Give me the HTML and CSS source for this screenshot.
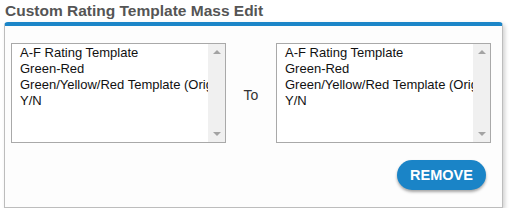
FILE: index.html
```html
<!DOCTYPE html>
<html>
<head>
<meta charset="utf-8">
<link rel="stylesheet" href="styles.css">
</head>
<body>
<h1 class="title">Custom Rating Template Mass Edit</h1>
<div class="panel">
  <div class="row">
    <div class="listbox">
      <ul class="options">
        <li>A-F Rating Template</li>
        <li>Green-Red</li>
        <li>Green/Yellow/Red Template (Original)</li>
        <li>Y/N</li>
      </ul>
      <div class="scrollbar"><span class="arrow up"></span><span class="arrow down"></span></div>
    </div>
    <div class="to">To</div>
    <div class="listbox">
      <ul class="options">
        <li>A-F Rating Template</li>
        <li>Green-Red</li>
        <li>Green/Yellow/Red Template (Original)</li>
        <li>Y/N</li>
      </ul>
      <div class="scrollbar"><span class="arrow up"></span><span class="arrow down"></span></div>
    </div>
  </div>
  <div class="actions">
    <button class="btn">REMOVE</button>
  </div>
</div>
</body>
</html>
```
FILE: styles.css
```css
html, body {
  margin: 0;
  padding: 0;
  background: #ffffff;
  font-family: "Liberation Sans", Arial, sans-serif;
}
.title {
  margin: 0;
  padding: 2px 0 0 5px;
  height: 20px;
  font-size: 15.5px;
  line-height: 18px;
  font-weight: bold;
  color: #555555;
}
.panel {
  margin-left: 4px;
  width: 491px;
  height: 164px;
  border: 1px solid #bdbdbd;
  border-top: 4px solid #1c86c8;
  border-radius: 4px 4px 0 0;
  background: #fdfdfd;
  box-shadow: 2px 2px 4px rgba(0,0,0,0.18);
  padding: 17px 0 0 6px;
}
.row {
  display: flex;
  align-items: center;
}
.listbox {
  width: 213px;
  height: 98px;
  border: 1px solid #a9a9a9;
  background: #ffffff;
  display: flex;
}
.options {
  list-style: none;
  margin: 0;
  padding: 1px 0 0 8px;
  flex: 1;
  min-width: 0;
  overflow: hidden;
  font-size: 13px;
  line-height: 16px;
  color: #111111;
  white-space: nowrap;
}
.scrollbar {
  width: 17px;
  flex: none;
  background: #f0f0f0;
  position: relative;
}
.arrow {
  position: absolute;
  left: 5px;
  width: 0;
  height: 0;
  border-left: 4px solid transparent;
  border-right: 4px solid transparent;
}
.arrow.up {
  top: 6px;
  border-bottom: 4px solid #a3a3a3;
}
.arrow.down {
  bottom: 6px;
  border-top: 4px solid #a3a3a3;
}
.to {
  width: 50px;
  text-align: center;
  font-size: 14px;
  color: #333333;
  padding-top: 4px;
}
.actions {
  display: flex;
  justify-content: flex-end;
  padding: 17px 16px 0 0;
}
.btn {
  width: 89px;
  height: 30px;
  border: none;
  border-radius: 15px;
  background: #1a84c7;
  color: #ffffff;
  font-family: "Liberation Sans", Arial, sans-serif;
  font-weight: bold;
  font-size: 14.5px;
  padding: 0;
  box-shadow: 0 2px 3px rgba(0,0,0,0.35);
}
```
